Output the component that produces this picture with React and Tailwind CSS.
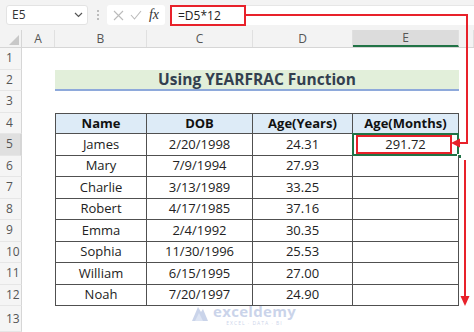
import React from "react";

const COLS = [
  { k: "A", w: "w-[33px]" },
  { k: "B", w: "w-[92px]" },
  { k: "C", w: "w-[106px]" },
  { k: "D", w: "w-[100px]" },
  { k: "E", w: "w-[106px]" },
  { k: "F", w: "w-[15px]" },
];

const DATA = [
  ["James", "2/20/1998", "24.31", "291.72"],
  ["Mary", "7/9/1994", "27.93", ""],
  ["Charlie", "3/13/1989", "33.25", ""],
  ["Robert", "4/17/1985", "37.16", ""],
  ["Emma", "2/4/1992", "30.35", ""],
  ["Sophia", "11/30/1996", "25.53", ""],
  ["William", "6/15/1995", "27.00", ""],
  ["Noah", "7/20/1997", "24.90", ""],
];

function RowHead({ n, active }) {
  return (
    <div
      className={
        "w-[22px] h-full shrink-0 flex items-center pl-[6px] text-[12px] text-[#555] border-r border-b border-r-[#d6d6d6] border-b-[#e6e6e6] " +
        (active ? "bg-[#e0e0e0] border-r-2 border-r-[#217346]" : "bg-[#f5f5f5]")
      }
    >
      {n}
    </div>
  );
}

function EmptyRow({ n, children, h = "h-[21.5px]" }) {
  return (
    <div className={"flex " + h}>
      <RowHead n={n} />
      {children}
    </div>
  );
}

export default function App() {
  return (
    <div className="w-[474px] h-[332px] overflow-hidden bg-white relative font-['Open_Sans',sans-serif] text-[#222]">
      {/* Formula bar */}
      <div className="h-[30px] bg-[#f3f3f3] flex items-center pl-[6px]">
        <div className="w-[82px] h-[20px] bg-white rounded-[3px] border border-[#e3e3e3] flex items-center justify-between pl-[5px] pr-[4px]">
          <span className="text-[12px] text-[#333]">E5</span>
          <svg width="9" height="6" viewBox="0 0 9 6">
            <path d="M1 1 L4.5 4.5 L8 1" fill="none" stroke="#555" strokeWidth="1.2" />
          </svg>
        </div>
        <div className="w-[19px] flex flex-col items-center gap-[2px]">
          <span className="w-[2px] h-[2px] bg-[#aaa] rounded-full" />
          <span className="w-[2px] h-[2px] bg-[#aaa] rounded-full" />
          <span className="w-[2px] h-[2px] bg-[#aaa] rounded-full" />
        </div>
        <div className="w-[58px] h-[20px] bg-white rounded-[3px] flex items-center justify-between px-[6px]">
          <svg width="11" height="11" viewBox="0 0 11 11">
            <path d="M1 1 L10 10 M10 1 L1 10" stroke="#bbb" strokeWidth="1.1" />
          </svg>
          <svg width="12" height="10" viewBox="0 0 12 10">
            <path d="M1 5 L4.5 9 L11 1" fill="none" stroke="#bbb" strokeWidth="1.1" />
          </svg>
          <span className="font-['Liberation_Serif',serif] italic text-[14px] text-[#333] leading-none">fx</span>
        </div>
        <div className="ml-[5px] flex-1 h-[20px] bg-white border-t border-[#e6e6e6] relative">
          <div className="absolute left-0 top-[-1px] w-[76px] h-[21px] border-2 border-[#e8212a] flex items-center pl-[6px] text-[12px] text-[#222]">
            =D5*12
          </div>
        </div>
      </div>

      {/* Column headers */}
      <div className="flex h-[18px] bg-[#f3f3f3] border-b border-[#d6d6d6]">
        <div className="w-[22px] shrink-0 border-r border-[#d6d6d6] relative">
          <svg className="absolute right-[2px] bottom-[2px]" width="10" height="10" viewBox="0 0 10 10">
            <path d="M10 0 L10 10 L0 10 Z" fill="#c8c8c8" />
          </svg>
        </div>
        {COLS.map((c) => (
          <div
            key={c.k}
            className={
              c.w +
              " shrink-0 flex items-center justify-center text-[12px] text-[#555] border-r border-[#e0e0e0] " +
              (c.k === "E" ? "bg-[#dcdcdc] border-b-2 border-b-[#217346]" : "")
            }
          >
            {c.k !== "F" ? c.k : ""}
          </div>
        ))}
      </div>

      {/* Rows 1-3 */}
      <EmptyRow n={1} />
      <EmptyRow n={2}>
        <div className="w-[33px] shrink-0" />
        <div className="w-[404px] shrink-0 bg-[#e2efda] border-b-2 border-[#8ea9db] flex items-center justify-center font-bold text-[15.5px] text-[#333f4f]">
          Using YEARFRAC Function
        </div>
      </EmptyRow>
      <EmptyRow n={3} />

      {/* Table header row 4 */}
      <div className="flex h-[21.5px]">
        <RowHead n={4} />
        <div className="w-[33px] shrink-0" />
        {["Name", "DOB", "Age(Years)", "Age(Months)"].map((h, i) => (
          <div
            key={h}
            className={
              ["w-[92px]", "w-[106px]", "w-[100px]", "w-[106px]"][i] +
              " shrink-0 bg-[#ddebf7] border-t border-r border-b border-[#505050] flex items-center justify-center font-bold text-[13px] text-[#111] " +
              (i === 0 ? "border-l" : "")
            }
          >
            {h}
          </div>
        ))}
      </div>

      {/* Data rows */}
      {DATA.map((r, ri) => (
        <div key={ri} className="flex h-[21.5px]">
          <RowHead n={ri + 5} active={ri === 0} />
          <div className="w-[33px] shrink-0" />
          {r.map((v, i) => (
            <div
              key={i}
              className={
                ["w-[92px]", "w-[106px]", "w-[100px]", "w-[106px]"][i] +
                " shrink-0 border-r border-b border-[#505050] flex items-center justify-center text-[13px] text-[#222] relative " +
                (i === 0 ? "border-l" : "")
              }
            >
              {v}
              {ri === 0 && i === 3 && (
                <>
                  <div className="absolute inset-[-1px] border-2 border-[#217346]" />
                  <div className="absolute left-[3px] right-[6px] top-[1px] bottom-[1px] border-[2.5px] border-[#e8212a]" />
                  <div className="absolute right-[-4px] bottom-[-4px] w-[5px] h-[5px] bg-[#217346] border border-white" />
                </>
              )}
            </div>
          ))}
        </div>
      ))}
      <EmptyRow n={13} h="h-[26px]">
        <div className="w-[33px] shrink-0" />
        <div className="w-[404px] shrink-0 flex pl-[135px]">
          <div className="flex items-start gap-[3px] opacity-35 -mt-[3px]">
            <svg width="20" height="20" viewBox="0 0 20 20">
              <path d="M2 18 L8 4 L11 9 L13 6 L18 18 Z" fill="#6b86c4" />
              <path d="M5 18 L9 10 L13 18 Z" fill="#9fb3dd" />
            </svg>
            <div className="flex flex-col items-center">
              <span className="text-[15px] leading-[17px] font-bold text-[#6b86c4] tracking-[0.3px]">exceldemy</span>
              <span className="text-[5px] leading-[6px] text-[#6b86c4] tracking-[1px]">EXCEL · DATA · BI</span>
            </div>
          </div>
        </div>
      </EmptyRow>

      {/* Red arrows overlay */}
      <svg className="absolute left-0 top-0 pointer-events-none" width="474" height="332" viewBox="0 0 474 332">
        <path d="M246 15 L467 15 L467 143 L458 143" fill="none" stroke="#e8212a" strokeWidth="2" />
        <path d="M451 143 L460 138.5 L460 147.5 Z" fill="#e8212a" />
        <path d="M465 160 L465 296" fill="none" stroke="#e8212a" strokeWidth="2" />
        <path d="M465 306 L460.5 296 L469.5 296 Z" fill="#e8212a" />
      </svg>
    </div>
  );
}
